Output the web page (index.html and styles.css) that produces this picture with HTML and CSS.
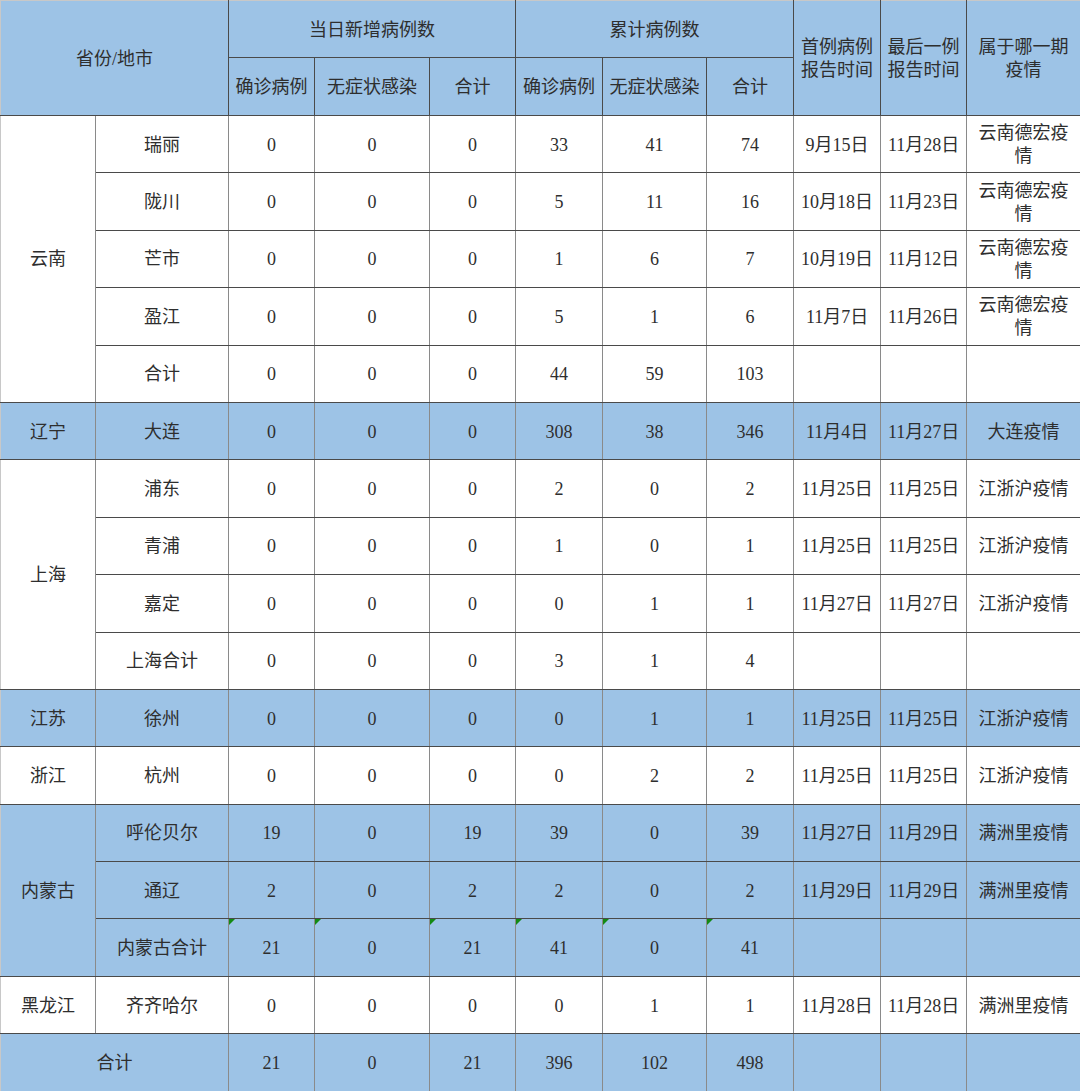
FILE: index.html
```html
<!DOCTYPE html>
<html lang="zh-CN">
<head>
<meta charset="utf-8">
<title>疫情统计</title>
<link rel="stylesheet" href="styles.css">
</head>
<body>
<table class="grid">
<colgroup>
<col class="c1"><col class="c2"><col class="c3"><col class="c4"><col class="c5"><col class="c6"><col class="c7"><col class="c8"><col class="c9"><col class="c10"><col class="c11">
</colgroup>
<thead>
<tr class="h1">
<th colspan="2" rowspan="2">省份/地市</th>
<th colspan="3">当日新增病例数</th>
<th colspan="3">累计病例数</th>
<th rowspan="2">首例病例报告时间</th>
<th rowspan="2">最后一例报告时间</th>
<th rowspan="2">属于哪一期疫情</th>
</tr>
<tr class="h2">
<th>确诊病例</th><th>无症状感染</th><th>合计</th>
<th>确诊病例</th><th>无症状感染</th><th>合计</th>
</tr>
</thead>
<tbody>
<tr><td rowspan="5">云南</td><td>瑞丽</td><td>0</td><td>0</td><td>0</td><td>33</td><td>41</td><td>74</td><td>9月15日</td><td>11月28日</td><td>云南德宏疫情</td></tr>
<tr><td>陇川</td><td>0</td><td>0</td><td>0</td><td>5</td><td>11</td><td>16</td><td>10月18日</td><td>11月23日</td><td>云南德宏疫情</td></tr>
<tr><td>芒市</td><td>0</td><td>0</td><td>0</td><td>1</td><td>6</td><td>7</td><td>10月19日</td><td>11月12日</td><td>云南德宏疫情</td></tr>
<tr><td>盈江</td><td>0</td><td>0</td><td>0</td><td>5</td><td>1</td><td>6</td><td>11月7日</td><td>11月26日</td><td>云南德宏疫情</td></tr>
<tr><td>合计</td><td>0</td><td>0</td><td>0</td><td>44</td><td>59</td><td>103</td><td></td><td></td><td></td></tr>
<tr class="blue"><td>辽宁</td><td>大连</td><td>0</td><td>0</td><td>0</td><td>308</td><td>38</td><td>346</td><td>11月4日</td><td>11月27日</td><td>大连疫情</td></tr>
<tr><td rowspan="4">上海</td><td>浦东</td><td>0</td><td>0</td><td>0</td><td>2</td><td>0</td><td>2</td><td>11月25日</td><td>11月25日</td><td>江浙沪疫情</td></tr>
<tr><td>青浦</td><td>0</td><td>0</td><td>0</td><td>1</td><td>0</td><td>1</td><td>11月25日</td><td>11月25日</td><td>江浙沪疫情</td></tr>
<tr><td>嘉定</td><td>0</td><td>0</td><td>0</td><td>0</td><td>1</td><td>1</td><td>11月27日</td><td>11月27日</td><td>江浙沪疫情</td></tr>
<tr><td>上海合计</td><td>0</td><td>0</td><td>0</td><td>3</td><td>1</td><td>4</td><td></td><td></td><td></td></tr>
<tr class="blue"><td>江苏</td><td>徐州</td><td>0</td><td>0</td><td>0</td><td>0</td><td>1</td><td>1</td><td>11月25日</td><td>11月25日</td><td>江浙沪疫情</td></tr>
<tr><td>浙江</td><td>杭州</td><td>0</td><td>0</td><td>0</td><td>0</td><td>2</td><td>2</td><td>11月25日</td><td>11月25日</td><td>江浙沪疫情</td></tr>
<tr class="blue"><td rowspan="3">内蒙古</td><td>呼伦贝尔</td><td>19</td><td>0</td><td>19</td><td>39</td><td>0</td><td>39</td><td>11月27日</td><td>11月29日</td><td>满洲里疫情</td></tr>
<tr class="blue"><td>通辽</td><td>2</td><td>0</td><td>2</td><td>2</td><td>0</td><td>2</td><td>11月29日</td><td>11月29日</td><td>满洲里疫情</td></tr>
<tr class="blue"><td>内蒙古合计</td><td class="mark">21</td><td class="mark">0</td><td class="mark">21</td><td class="mark">41</td><td class="mark">0</td><td class="mark">41</td><td></td><td></td><td></td></tr>
<tr><td>黑龙江</td><td>齐齐哈尔</td><td>0</td><td>0</td><td>0</td><td>0</td><td>1</td><td>1</td><td>11月28日</td><td>11月28日</td><td>满洲里疫情</td></tr>
<tr class="blue"><td colspan="2">合计</td><td>21</td><td>0</td><td>21</td><td>396</td><td>102</td><td>498</td><td></td><td></td><td></td></tr>
</tbody>
</table>
</body>
</html>
```
FILE: styles.css
```css
html, body {
  margin: 0;
  padding: 0;
  background: #ffffff;
}
.grid {
  width: 1080px;
  border-collapse: collapse;
  table-layout: fixed;
  font-family: "Liberation Serif", "Noto Sans CJK SC", serif;
  font-size: 18px;
  color: #2e2e2e;
}
.c1 { width: 95px; }
.c2 { width: 133px; }
.c3 { width: 86px; }
.c4 { width: 115px; }
.c5 { width: 86px; }
.c6 { width: 87px; }
.c7 { width: 104px; }
.c8 { width: 87px; }
.c9 { width: 87px; }
.c10 { width: 86px; }
.c11 { width: 114px; }
.grid th, .grid td {
  border: 1px solid #4a4a4a;
  text-align: center;
  vertical-align: middle;
  padding: 2px 5px 0;
  line-height: 23px;
  font-weight: normal;
  overflow: hidden;
}
.grid thead th {
  background: #9dc3e6;
}
.h1 { height: 57px; }
.h2 { height: 58px; }
.grid tbody tr { height: 57.4px; }
.grid tbody td {
  border-left-color: #8a8a8a;
  border-right-color: #8a8a8a;
}
.grid thead tr:first-child th { border-top-color: #c8c8c8; }
.grid th:first-child { border-left-color: #c8c8c8; }
.grid tbody tr td:first-child { border-left-color: #c8c8c8; }
.grid tr.blue td { background: #9dc3e6; }
.grid td.mark { position: relative; }
.grid td.mark::before {
  content: "";
  position: absolute;
  left: 0;
  top: 0;
  width: 0;
  height: 0;
  border-top: 6px solid #138a13;
  border-right: 6px solid transparent;
}
```
